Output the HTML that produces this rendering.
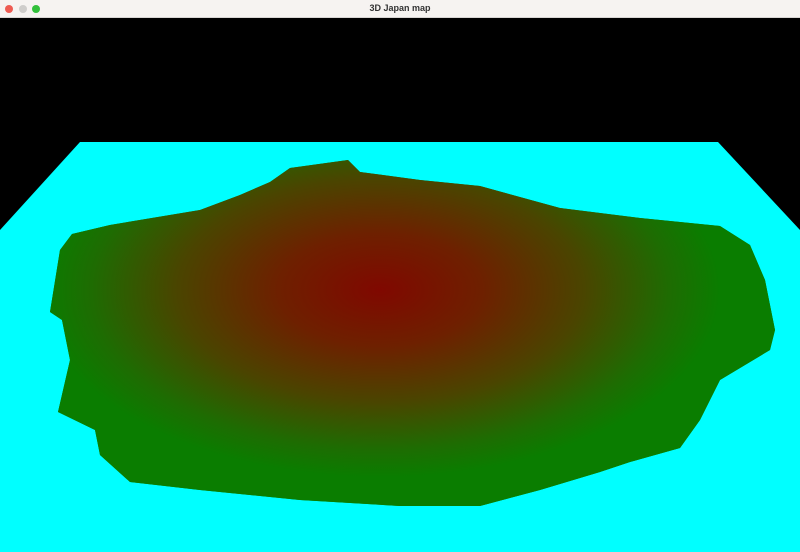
<!DOCTYPE html>
<html><head><style>
html,body{margin:0;padding:0;width:800px;height:552px;overflow:hidden;background:#000}
.bar{position:absolute;left:0;top:0;width:800px;height:18px;background:#f6f3f1;border-bottom:1px solid #d8d5d3;box-sizing:border-box}
.t{position:absolute;left:0;width:800px;top:3px;text-align:center;font:bold 9px "Liberation Sans",sans-serif;color:#333}
.d{position:absolute;top:5px;width:8px;height:8px;border-radius:50%}
</style></head><body>
<div class="bar"><div class="d" style="left:5px;background:#ee5b52"></div><div class="d" style="left:19px;background:#cfcdcb"></div><div class="d" style="left:32px;background:#32c03b"></div><div class="t">3D Japan map</div></div>
<svg width="800" height="552" style="position:absolute;left:0;top:0">
<defs>
<radialGradient id="r" cx="380" cy="290" r="340" gradientUnits="userSpaceOnUse" gradientTransform="translate(380 290) scale(1 0.55) translate(-380 -290)">
<stop offset="0" stop-color="#800800"/><stop offset="0.3" stop-color="#6e2000"/><stop offset="0.6" stop-color="#4a4500"/><stop offset="0.85" stop-color="#1e6c02"/><stop offset="1" stop-color="#0a7d00"/>
</radialGradient>
<linearGradient id="g" x1="0" y1="0" x2="0" y2="1"><stop offset="0" stop-color="#0c7a00"/><stop offset="1" stop-color="#0a8000"/></linearGradient>
</defs>
<polygon points="80,142 718,142 800,230 800,552 0,552 0,230" fill="#00ffff"/>
<polygon points="290,168 348,160 360,172 420,180 480,186 560,208 640,218 720,226 750,245 765,280 775,330 770,350 720,380 700,420 680,448 630,462 600,472 540,490 480,506 400,506 300,500 200,490 130,482 100,455 95,430 58,412 70,360 62,320 50,312 60,250 72,234 110,225 200,210 240,195 270,182" fill="url(#g)"/>
<polygon points="290,168 348,160 360,172 420,180 480,186 560,208 640,218 720,226 750,245 765,280 775,330 770,350 720,380 700,420 680,448 630,462 600,472 540,490 480,506 400,506 300,500 200,490 130,482 100,455 95,430 58,412 70,360 62,320 50,312 60,250 72,234 110,225 200,210 240,195 270,182" fill="url(#r)"/>
</svg>
</body></html>
